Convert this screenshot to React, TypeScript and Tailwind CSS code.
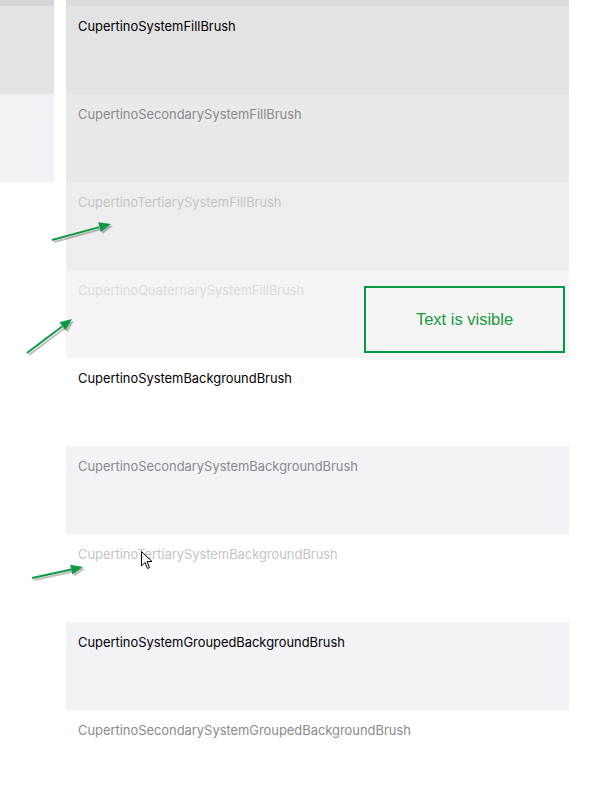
const rows = [
  { name: "CupertinoSystemFillBrush", bg: "bg-[#e3e3e5]", text: "text-[#000000]" },
  { name: "CupertinoSecondarySystemFillBrush", bg: "bg-[#e9e9ea]", text: "text-[#8a8a8e]" },
  { name: "CupertinoTertiarySystemFillBrush", bg: "bg-[#eeeeef]", text: "text-[#c4c4c7]" },
  { name: "CupertinoQuaternarySystemFillBrush", bg: "bg-[#f4f4f4]", text: "text-[#dcdcde]" },
  { name: "CupertinoSystemBackgroundBrush", bg: "bg-white", text: "text-[#000000]" },
  { name: "CupertinoSecondarySystemBackgroundBrush", bg: "bg-[#f2f2f7]", text: "text-[#8a8a8e]" },
  { name: "CupertinoTertiarySystemBackgroundBrush", bg: "bg-white", text: "text-[#c4c4c7]" },
  { name: "CupertinoSystemGroupedBackgroundBrush", bg: "bg-[#f2f2f7]", text: "text-[#000000]" },
  { name: "CupertinoSecondarySystemGroupedBackgroundBrush", bg: "bg-white", text: "text-[#8a8a8e]" },
];

const Arrow = ({ x1, y1, x2, y2 }: { x1: number; y1: number; x2: number; y2: number }) => {
  const a = Math.atan2(y2 - y1, x2 - x1);
  const len = 12;
  const w = 5;
  const bx = x2 - len * Math.cos(a);
  const by = y2 - len * Math.sin(a);
  const p1 = `${bx + w * Math.sin(a)},${by - w * Math.cos(a)}`;
  const p2 = `${bx - w * Math.sin(a)},${by + w * Math.cos(a)}`;
  return (
    <g>
      <g transform="translate(2,2)" opacity="0.25">
        <line x1={x1} y1={y1} x2={bx} y2={by} stroke="#000" strokeWidth="2" />
        <polygon points={`${x2},${y2} ${p1} ${p2}`} fill="#000" />
      </g>
      <line x1={x1} y1={y1} x2={bx} y2={by} stroke="#0e9a44" strokeWidth="2" />
      <polygon points={`${x2},${y2} ${p1} ${p2}`} fill="#0e9a44" />
    </g>
  );
};

export default function App() {
  return (
    <div className="relative w-[592px] h-[787px] overflow-hidden bg-white font-['Inter','Noto_Sans',sans-serif]">
      <div className="flex gap-3">
        <div className="w-[54px] flex flex-col">
          <div className="h-[6px] bg-[#d4d4d9]" />
          <div className="h-[88px] bg-[#e3e3e6]" />
          <div className="h-[88px] bg-[#f2f2f7]" />
        </div>
        <div className="w-[503px] flex flex-col">
          <div className="h-[6px] bg-[#dcdcdd]" />
          {rows.map((r) => (
            <div key={r.name} className={`h-[88px] shrink-0 px-3 pt-[13px] text-[12.9px] leading-[15px] ${r.bg} ${r.text}`}>
              {r.name}
            </div>
          ))}
        </div>
      </div>

      <div className="absolute left-[364px] top-[286px] w-[201px] h-[67px] border-2 border-[#009a46] flex items-center justify-center text-[16.5px] text-[#18993c] font-['Liberation_Sans',Arial,sans-serif]">
        Text is visible
      </div>

      <svg className="absolute left-0 top-0" width="592" height="787">
        <Arrow x1={52} y1={240} x2={111} y2={224} />
        <Arrow x1={27} y1={353} x2={72} y2={319} />
        <Arrow x1={32} y1={578} x2={83} y2={567} />
        <path
          d="M141.5 551.5 L141.5 566 L145 562.5 L147.5 568.5 L149.5 567.5 L147 561.5 L152 561.5 Z"
          fill="#fff"
          stroke="#000"
          strokeWidth="1"
          strokeLinejoin="round"
        />
      </svg>
    </div>
  );
}
